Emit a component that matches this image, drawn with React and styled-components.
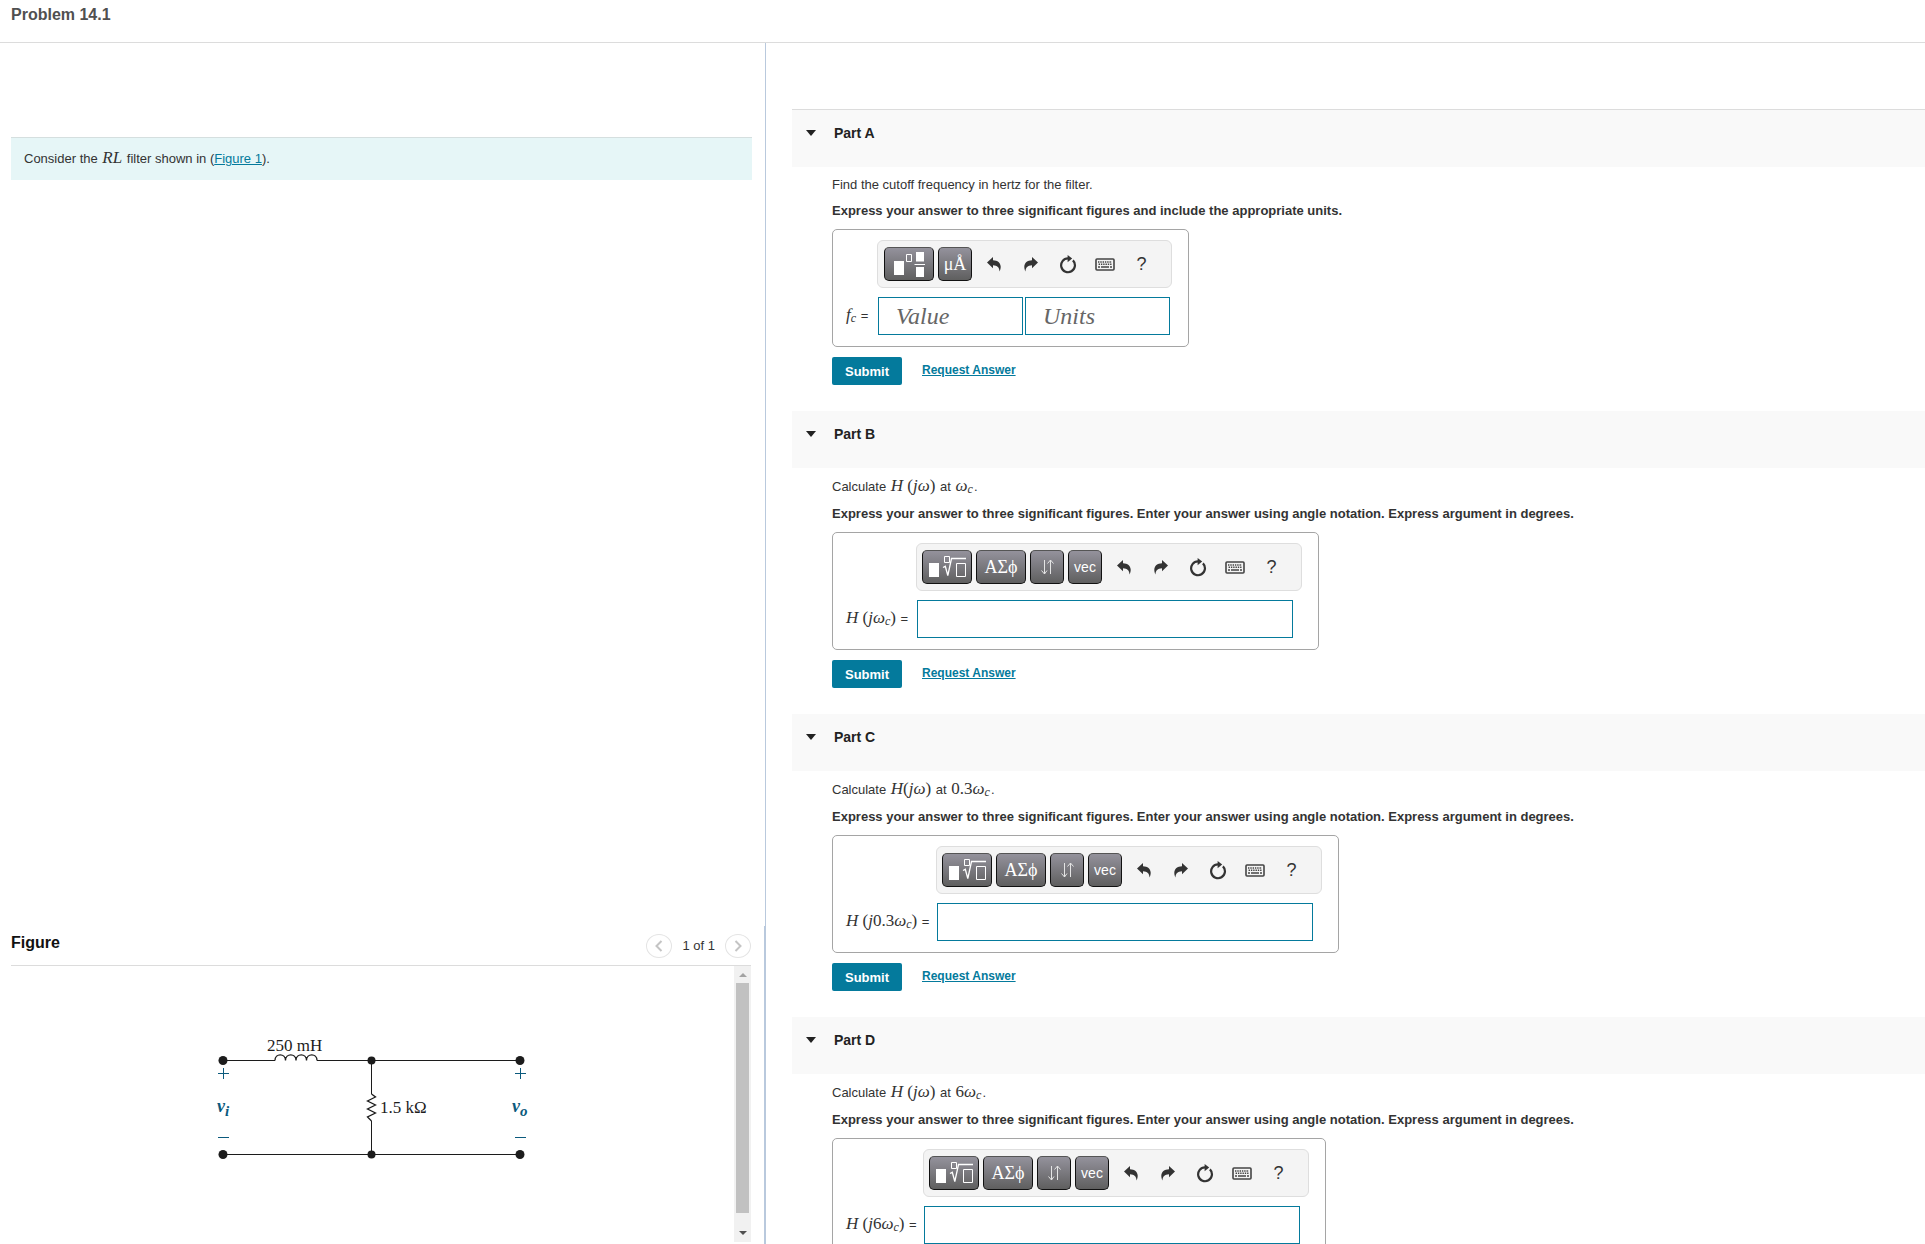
import { useId } from "react";
import styled, { createGlobalStyle } from "styled-components";

const Formula = styled.span`
  margin: 0 1px;
  font-family: "Liberation Serif", "Times New Roman", serif;
  font-size: 17px;
  line-height: 1;
`;

const Var = styled.i`
  font-style: italic;
`;

const Sub = styled.sub`
  font-size: 12px;
  font-style: italic;
  line-height: 0;
  vertical-align: -2px;
`;

const OmegaC = () => (
  <>
    <Var>ω</Var>
    <Sub>c</Sub>
  </>
);

const INSTRUCTION_ANGLE =
  "Express your answer to three significant figures. Enter your answer using angle notation. Express argument in degrees.";

const parts = [
  {
    name: "Part A",
    first: true,
    units: true,
    actions: true,
    labelWidth: 32,
    question: "Find the cutoff frequency in hertz for the filter.",
    instruction:
      "Express your answer to three significant figures and include the appropriate units.",
    label: (
      <Formula>
        <Var>f</Var>
        <Sub>c</Sub>
      </Formula>
    ),
  },
  {
    name: "Part B",
    actions: true,
    labelWidth: 71,
    question: (
      <>
        Calculate{" "}
        <Formula>
          <Var>H</Var> (<Var>jω</Var>)
        </Formula>{" "}
        at{" "}
        <Formula>
          <OmegaC />
        </Formula>
        .
      </>
    ),
    instruction: INSTRUCTION_ANGLE,
    label: (
      <Formula>
        <Var>H</Var> (<Var>j</Var>
        <OmegaC />)
      </Formula>
    ),
  },
  {
    name: "Part C",
    actions: true,
    labelWidth: 91,
    question: (
      <>
        Calculate{" "}
        <Formula>
          <Var>H</Var>(<Var>jω</Var>)
        </Formula>{" "}
        at{" "}
        <Formula>
          0.3
          <OmegaC />
        </Formula>
        .
      </>
    ),
    instruction: INSTRUCTION_ANGLE,
    label: (
      <Formula>
        <Var>H</Var> (<Var>j</Var>0.3
        <OmegaC />)
      </Formula>
    ),
  },
  {
    name: "Part D",
    actions: false,
    labelWidth: 78,
    question: (
      <>
        Calculate{" "}
        <Formula>
          <Var>H</Var> (<Var>jω</Var>)
        </Formula>{" "}
        at{" "}
        <Formula>
          6<OmegaC />
        </Formula>
        .
      </>
    ),
    instruction: INSTRUCTION_ANGLE,
    label: (
      <Formula>
        <Var>H</Var> (<Var>j</Var>6
        <OmegaC />)
      </Formula>
    ),
  },
];

const UndoIcon = () => (
  <svg width="14" height="15" viewBox="0 0 14 15" fill="#333">
    <path d="M0 5.6 6 0V3.2C10.6 3.4 13.7 5.8 13.7 9.8C13.7 11.7 13.2 13.2 12.5 14.5C12.5 10.7 10.3 8.5 6 8.3V11.3Z" />
  </svg>
);

const RedoIcon = () => (
  <svg width="14" height="15" viewBox="0 0 14 15" fill="#333">
    <path d="M14 5.6 8 0V3.2C3.4 3.4 0.3 5.8 0.3 9.8C0.3 11.7 0.8 13.2 1.5 14.5C1.5 10.7 3.7 8.5 8 8.3V11.3Z" />
  </svg>
);

const ResetIcon = () => (
  <svg width="18" height="19" viewBox="0 0 18 19" fill="none">
    <path d="M13.9 5.4A6.9 6.9 0 1 1 9 3.4" stroke="#333" strokeWidth="2.2" />
    <path d="M8.6 0 13.2 3.6 8.6 7.2Z" fill="#333" />
  </svg>
);

const KeyboardIcon = () => (
  <svg width="20" height="13" viewBox="0 0 20 13" fill="none" stroke="#444">
    <rect x="1" y="1" width="18" height="11" rx="1" strokeWidth="1.6" />
    <path d="M3 4h14M3.6 6.3h13.4" strokeWidth="1.5" strokeDasharray="1.4 0.9" />
    <path d="M3 9h2M6 9h8M15 9h2" strokeWidth="1.6" />
  </svg>
);

const FractionIcon = () => (
  <svg width="31" height="25" viewBox="0 0 31 25" fill="#fff">
    <path d="M0 9H10V23H0ZM22 0H30V9.5H22ZM22 15H30V25H22ZM20.5 12H31V13H20.5Z" />
    <path d="M12.5 2.5H17.5V9.5H12.5Z" fill="none" stroke="#fff" />
  </svg>
);

const RootIcon = () => (
  <svg width="37" height="22" viewBox="0 0 37 22" fill="none" stroke="#fff">
    <path d="M0 7H10V21H0Z" fill="#fff" stroke="none" />
    <path d="M15.5 0.5H20.5V6.5H15.5ZM27.5 7.5H36.5V20.5H27.5Z" />
    <path d="M14 11.5 16.3 10.3 18.8 19.5 22.5 2.5H37" strokeWidth="1.3" />
  </svg>
);

const ArrowsIcon = () => (
  <svg width="13" height="16" viewBox="0 0 13 16" fill="none" stroke="#e4e4e4">
    <path d="M3.5 1V15M0.5 11.5 3.5 15 6 11.5M9.5 15V1M6.5 4.5 9.5 1 12.5 4.5" />
  </svg>
);

const Chevron = ({ flip }) => (
  <svg width="8" height="12" viewBox="0 0 8 12" fill="none">
    <path
      d={flip ? "M1.5 1 6.5 6 1.5 11" : "M6.5 1 1.5 6 6.5 11"}
      stroke="#c4c4c4"
      strokeWidth="2"
    />
  </svg>
);

const Circuit = () => (
  <svg width="330" height="140" viewBox="0 0 330 140" role="img" aria-label="RL filter circuit">
    <g fill="none" stroke="#1c1c1c">
      <path d="M17 34.5H69M111 34.5H314M17 128.5H314M165.5 34V68M165.5 95V128" />
      <path
        d="M69 34.5C69 27 79.5 27 79.5 34.5C79.5 27 90 27 90 34.5C90 27 100.5 27 100.5 34.5C100.5 27 111 27 111 34.5"
        strokeWidth="1.3"
      />
      <path
        d="M165.5 68 169.5 71 161.5 75 169.5 79 161.5 83 169.5 87 161.5 91 165.5 95"
        strokeWidth="1.3"
      />
    </g>
    <g fill="#1c1c1c">
      <circle cx="17" cy="34.5" r="4.5" />
      <circle cx="165.5" cy="34.5" r="4" />
      <circle cx="314" cy="34.5" r="4.5" />
      <circle cx="17" cy="128.5" r="4.5" />
      <circle cx="165.5" cy="128.5" r="4" />
      <circle cx="314" cy="128.5" r="4.5" />
    </g>
    <path
      d="M12 47.5H23M17.5 42V53M309 47.5H320M314.5 42V53M12 111.5H23M309 111.5H320"
      stroke="#0b5a7d"
    />
    <CircuitText x="61" y="25">
      250 mH
    </CircuitText>
    <CircuitText x="174" y="87">
      1.5 kΩ
    </CircuitText>
    <CircuitVar x="11" y="86">
      v
      <tspan dy="4" fontSize="15">
        i
      </tspan>
    </CircuitVar>
    <CircuitVar x="306" y="86">
      v
      <tspan dy="4" fontSize="15">
        o
      </tspan>
    </CircuitVar>
  </svg>
);

const AnswerToolbar = ({ units }) => (
  <Toolbar $units={units}>
    {units ? (
      <Keys>
        <Key $wide aria-label="Templates">
          <FractionIcon />
        </Key>
        <Key>μÅ</Key>
      </Keys>
    ) : (
      <Keys>
        <Key $wide aria-label="Templates">
          <RootIcon />
        </Key>
        <Key $wide>ΑΣϕ</Key>
        <Key aria-label="Subscripts">
          <ArrowsIcon />
        </Key>
        <Key $sans>vec</Key>
      </Keys>
    )}
    <Tool aria-label="Undo">
      <UndoIcon />
    </Tool>
    <Tool aria-label="Redo">
      <RedoIcon />
    </Tool>
    <Tool aria-label="Reset">
      <ResetIcon />
    </Tool>
    <Tool aria-label="Keyboard shortcuts">
      <KeyboardIcon />
    </Tool>
    <Tool>?</Tool>
  </Toolbar>
);

const Part = ({ part }) => {
  const id = useId();

  return (
    <section>
      <PartHeader $first={part.first}>
        <Caret />
        <h2>{part.name}</h2>
      </PartHeader>
      <PartBody>
        <Question $math={!part.first}>{part.question}</Question>
        <Instruction>{part.instruction}</Instruction>
        <AnswerBox $labelWidth={part.labelWidth}>
          <AnswerToolbar units={part.units} />
          <Label htmlFor={id}>{part.label} =</Label>
          <Fields>
            {part.units ? (
              <>
                <Field id={id} $short placeholder="Value" />
                <Field $short placeholder="Units" aria-label="Units" />
              </>
            ) : (
              <Field id={id} />
            )}
          </Fields>
        </AnswerBox>
        {part.actions && (
          <Actions>
            <Submit type="button">Submit</Submit>
            <RequestLink href="#answer">Request Answer</RequestLink>
          </Actions>
        )}
      </PartBody>
    </section>
  );
};

const App = () => {
  return (
    <Page>
      <GlobalStyle />
      <Header>
        <h1>Problem 14.1</h1>
      </Header>
      <Columns>
        <LeftColumn>
          <Intro>
            <IntroBox>
              Consider the{" "}
              <Formula>
                <Var>RL</Var>
              </Formula>{" "}
              filter shown in (<a href="#figure">Figure 1</a>).
            </IntroBox>
          </Intro>
          <FigurePane id="figure">
            <FigureHeader>
              <h2>Figure</h2>
              <Pager>
                <PageButton aria-label="Previous figure">
                  <Chevron />
                </PageButton>
                <span>1 of 1</span>
                <PageButton aria-label="Next figure">
                  <Chevron flip />
                </PageButton>
              </Pager>
            </FigureHeader>
            <FigureBody>
              <Drawing>
                <Circuit />
              </Drawing>
              <ScrollTrack>
                <ScrollArrow />
                <ScrollThumb />
                <ScrollArrow $down />
              </ScrollTrack>
            </FigureBody>
          </FigurePane>
        </LeftColumn>
        <RightColumn>
          {parts.map((part) => (
            <Part key={part.name} part={part} />
          ))}
        </RightColumn>
      </Columns>
    </Page>
  );
};

export default App;

const GlobalStyle = createGlobalStyle`
  * {
    box-sizing: border-box;
  }
  body {
    margin: 0;
    background: #fff;
    color: #333;
    font-family: "Liberation Sans", Arial, sans-serif;
    font-size: 13px;
  }
  h1, h2, p {
    margin: 0;
  }
  button {
    padding: 0;
    font-family: inherit;
    cursor: pointer;
  }
`;

const Page = styled.div`
  display: flex;
  flex-direction: column;
  height: 100vh;
  overflow: hidden;
`;

const Header = styled.header`
  padding: 5px 11px 17px;
  border-bottom: 1px solid #dcdcdc;
  h1 {
    color: #505050;
    font-size: 16px;
    line-height: 20px;
  }
`;

const Columns = styled.main`
  flex: 1;
  display: grid;
  grid-template-columns: 766fr 1159fr;
  grid-template-rows: minmax(0, 1fr);
  min-height: 0;
`;

const LeftColumn = styled.div`
  display: flex;
  flex-direction: column;
  min-height: 0;
`;

const Intro = styled.div`
  flex: 1;
  padding: 94px 13px 0 11px;
  border-right: 1px solid #b9c9dd;
`;

const IntroBox = styled.p`
  padding: 8px 13px 9px;
  border-top: 1px solid #d5dfdf;
  background: #e6f6f7;
  line-height: 25px;
  a {
    color: #047a9c;
  }
`;

const FigurePane = styled.section`
  display: flex;
  flex-direction: column;
  height: 318px;
  padding: 0 13px 2px 11px;
  border-right: 2px solid #b9c9dd;
`;

const FigureHeader = styled.div`
  display: flex;
  align-items: center;
  justify-content: space-between;
  height: 40px;
  border-bottom: 1px solid #dcdcdc;
  h2 {
    padding-bottom: 6px;
    color: #111;
    font-size: 16px;
  }
`;

const Pager = styled.div`
  display: flex;
  align-items: center;
  gap: 10px;
`;

const PageButton = styled.button`
  display: flex;
  align-items: center;
  justify-content: center;
  width: 26px;
  height: 24px;
  border: 1px solid #e4e4e4;
  border-radius: 50%;
  background: #fff;
`;

const FigureBody = styled.div`
  flex: 1;
  display: flex;
  min-height: 0;
`;

const Drawing = styled.div`
  flex: 1;
  display: flex;
  justify-content: center;
  align-items: flex-start;
  padding: 60px 4px 0 0;
`;

const CircuitText = styled.text`
  fill: #1c1c1c;
  font-family: "Liberation Serif", serif;
  font-size: 17px;
`;

const CircuitVar = styled.text`
  fill: #0b5a7d;
  font-family: "Liberation Serif", serif;
  font-size: 18px;
  font-style: italic;
  font-weight: 700;
`;

const ScrollTrack = styled.div`
  display: flex;
  flex-direction: column;
  align-items: center;
  width: 17px;
  padding-bottom: 7px;
  background: #f1f1f1;
`;

const ScrollThumb = styled.div`
  flex: 1;
  width: 13px;
  margin-bottom: 18px;
  background: #c1c1c1;
`;

const ScrollArrow = styled.div`
  height: 4px;
  margin: ${(props) => (props.$down ? "0" : "7px 0 6px")};
  border: solid transparent;
  border-width: ${(props) => (props.$down ? "4px 4px 0" : "0 4px 4px")};
  border-top-color: ${(props) => (props.$down ? "#505050" : "transparent")};
  border-bottom-color: ${(props) => (props.$down ? "transparent" : "#a3a3a3")};
`;

const RightColumn = styled.div`
  padding: 66px 0 0 26px;
  overflow: hidden;
`;

const PartHeader = styled.div`
  display: flex;
  gap: 18px;
  padding: 13px 14px 24px;
  border-top: ${(props) => (props.$first ? "1px solid #dcdcdc" : "none")};
  background: #f9f9f9;
  h2 {
    color: #222;
    font-size: 14px;
    line-height: 20px;
  }
`;

const Caret = styled.span`
  align-self: center;
  border: solid transparent;
  border-width: 6px 5px 0;
  border-top-color: #222;
`;

const PartBody = styled.div`
  padding: 5px 0 26px 40px;
`;

const Question = styled.p`
  line-height: ${(props) => (props.$math ? "28px" : "26px")};
`;

const Instruction = styled.p`
  line-height: 26px;
  font-weight: 700;
`;

const AnswerBox = styled.div`
  display: grid;
  grid-template-columns: ${(props) => props.$labelWidth}px auto;
  row-gap: 9px;
  width: fit-content;
  margin-top: 5px;
  padding: 10px 16px 11px 12px;
  border: 1px solid #a5a5a5;
  border-radius: 5px;
`;

const Toolbar = styled.div`
  grid-column: 2;
  display: flex;
  align-items: center;
  height: 48px;
  padding: 0 11px 0 ${(props) => (props.$units ? "6px" : "5px")};
  border: 1px solid #dedede;
  border-radius: 6px;
  background: #f4f4f4;
`;

const Keys = styled.div`
  display: flex;
  gap: 4px;
  margin-right: 3px;
`;

const Key = styled.button`
  display: flex;
  align-items: center;
  justify-content: center;
  width: ${(props) => (props.$wide ? "50px" : "34px")};
  height: 34px;
  border: 1px solid #111;
  border-top-color: #555;
  border-radius: 5px;
  background: linear-gradient(#94929c, #5f5f5f);
  color: #fff;
  && {
    font-family: ${(props) =>
      props.$sans ? '"Liberation Sans", sans-serif' : '"Liberation Serif", serif'};
  }
  font-size: ${(props) => (props.$sans ? "14px" : "18px")};
`;

const Tool = styled.button`
  display: flex;
  align-items: center;
  justify-content: center;
  width: 37px;
  height: 34px;
  border: 0;
  background: none;
  color: #333;
  font-size: 18px;
`;

const Label = styled.label`
  align-self: center;
  padding-bottom: 3px;
  white-space: nowrap;
`;

const Fields = styled.div`
  display: flex;
  gap: 2px;
  padding: 0 1px;
`;

const Field = styled.input`
  width: ${(props) => (props.$short ? "145px" : "376px")};
  height: 38px;
  padding: 0 17px;
  border: 1px solid #047a9c;
  border-radius: 0;
  background: #fff;
  font-family: "Liberation Serif", serif;
  font-size: 24px;
  &::placeholder {
    color: #666;
    font-style: italic;
  }
`;

const Actions = styled.div`
  display: flex;
  align-items: center;
  gap: 20px;
  margin-top: 10px;
`;

const Submit = styled.button`
  width: 70px;
  height: 28px;
  border: 0;
  border-radius: 2px;
  background: #047a9c;
  color: #fff;
  font-size: 13px;
  font-weight: 700;
`;

const RequestLink = styled.a`
  padding-bottom: 3px;
  color: #047a9c;
  font-size: 12px;
  font-weight: 700;
`;
